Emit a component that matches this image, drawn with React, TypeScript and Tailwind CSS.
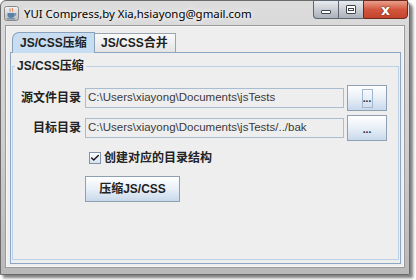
import { Check } from "lucide-react";

function JavaIcon() {
  return (
    <svg width="15" height="15" viewBox="0 0 15 15">
      <defs>
        <linearGradient id="jg" x1="0" y1="0" x2="0" y2="1">
          <stop offset="0" stopColor="#f4f4f4" />
          <stop offset="1" stopColor="#b8b8b8" />
        </linearGradient>
      </defs>
      <rect x="0.5" y="0.5" width="14" height="14" rx="2" fill="url(#jg)" stroke="#8a8a8a" />
      <path d="M6 2.5c-1 1 1 1.5 0 3M8.5 2c-1 1.2 1 1.8 0 3.5" stroke="#e0632a" strokeWidth="1" fill="none" />
      <path d="M3.5 7h7v2.5c0 1.6-1.4 2.5-3.5 2.5S3.5 11.1 3.5 9.5z" fill="#5a7fa8" />
      <path d="M10.5 7.6h1.2v1.6h-1.2" stroke="#5a7fa8" strokeWidth="0.9" fill="none" />
      <rect x="3" y="12.3" width="8" height="1" fill="#5a7fa8" />
    </svg>
  );
}

function CaptionButtons() {
  return (
    <div className="flex self-start -mt-px mr-[1px] h-[19px]">
      <div className="w-[25px] h-full rounded-bl-[4px] border border-[#5e6670] border-r-0 bg-gradient-to-b from-[#e9ecef] via-[#c9ced4] to-[#aab1b9] flex items-center justify-center">
        <div className="w-[10px] h-[4px] mt-[4px] border border-[#3e454c] bg-white rounded-[1px]" />
      </div>
      <div className="w-[25px] h-full border border-[#5e6670] border-r-0 bg-gradient-to-b from-[#e9ecef] via-[#c9ced4] to-[#aab1b9] flex items-center justify-center">
        <div className="w-[10px] h-[9px] border border-[#3e454c] bg-white rounded-[1px] flex items-center justify-center">
          <div className="w-[6px] h-[3px] border border-[#3e454c]" />
        </div>
      </div>
      <div className="w-[45px] h-full rounded-br-[4px] border border-[#6a2a1f] bg-gradient-to-b from-[#e8a08c] via-[#d3563e] to-[#c4432c] flex items-center justify-center text-white font-bold text-[14px] leading-none font-['DejaVu_Sans',sans-serif] [text-shadow:0_0_2px_#5a1a10]">
        x
      </div>
    </div>
  );
}

function OceanButton({ children, className = "" }: { children: React.ReactNode; className?: string }) {
  return (
    <button
      type="button"
      className={`h-[26px] border border-[#8fa0b3] bg-gradient-to-b from-[#ffffff] via-[#e8eff7] to-[#c8d9eb] text-[12px] font-bold text-[#222] flex items-center justify-center ${className}`}
    >
      {children}
    </button>
  );
}

function PathRow({ label, value, focused }: { label: string; value: string; focused?: boolean }) {
  return (
    <div className="flex items-center h-[26px]">
      <div className="w-[68px] text-right text-[12px] font-bold text-[#222]">{label}</div>
      <div className="ml-[4px] w-[259px] h-[20px] border border-[#a8bcd2] bg-[#eeeeee] flex items-center px-[2px] text-[11.5px] text-[#3a3a3a] whitespace-nowrap overflow-hidden">
        {value}
      </div>
      <OceanButton className="ml-[3px] w-[40px]">
        {focused ? (
          <span className="w-[11px] h-[19px] border border-[#a3b8cc] flex items-end justify-center pb-[3px] text-[10px] leading-none">...</span>
        ) : (
          <span className="text-[10px] leading-none pt-[4px]">...</span>
        )}
      </OceanButton>
    </div>
  );
}

export default function App() {
  return (
    <div className="w-[416px] h-[280px] bg-white font-['Liberation_Sans','Noto_Sans_CJK_SC',sans-serif]">
      <div className="w-[410px] h-[275px] rounded-t-[6px] border border-[#6c6c6c] bg-gradient-to-b from-[#dcdcdc] via-[#cfcfcf] to-[#b9b9b9] shadow-[3px_3px_3px_rgba(0,0,0,0.5)] flex flex-col">
        <div className="h-[25px] flex items-center pl-[3px]">
          <JavaIcon />
          <span className="ml-[5px] text-[11.4px] text-black font-['Noto_Sans',sans-serif] [text-shadow:0_0_5px_#fff,0_0_9px_#fff]">
            YUI Compress,by Xia,hsiayong@gmail.com
          </span>
          <div className="ml-auto self-start">
            <CaptionButtons />
          </div>
        </div>
        <div className="mx-[5px] mb-[7px] flex-1 border border-[#f7f7f7] outline outline-1 outline-[#9a9a9a] bg-[#eeeeee] flex flex-col">
          <div className="ml-[3px] mr-[2px] mt-[5px] mb-[2px] flex-1 flex flex-col">
            <div className="flex pl-[2px] h-[20px] items-end">
              <div className="relative z-10 -mb-px h-[21px] w-[83px] rounded-tl-[7px] border border-b-0 border-[#8a9fb8] bg-[#c8ddf2] flex items-center pl-[7px] text-[12px] font-bold text-[#222]">
                JS/CSS压缩
              </div>
              <div className="h-[19px] w-[81px] border border-l-0 border-b-0 border-[#9aa5b0] bg-gradient-to-b from-[#fafafa] to-[#e4e4e4] flex items-center pl-[6px] text-[12px] font-bold text-[#222]">
                JS/CSS合并
              </div>
            </div>
            <div className="flex-1 border border-[#8ca6c4] flex flex-col">
              <div className="ml-[1px] mr-[1px] mt-[13px] mb-[3px] flex-1 border border-[#bcd0e6] flex flex-col">
                <div className="-mt-[8px] ml-[2px] px-[2px] w-fit bg-[#eeeeee] text-[12px] leading-[14px] font-bold text-[#222]">
                  JS/CSS压缩
                </div>
                <div className="mt-[12px] flex flex-col gap-[4px]">
                  <PathRow label="源文件目录" value="C:\Users\xiayong\Documents\jsTests" focused />
                  <PathRow label="目标目录" value="C:\Users\xiayong\Documents\jsTests/../bak" />
                </div>
                <div className="mt-[9px] ml-[76px] h-[16px] flex items-center gap-[3px]">
                  <span className="w-[12px] h-[12px] border border-[#7f93a8] bg-gradient-to-b from-white to-[#d6e2ef] flex items-center justify-center">
                    <Check size={10} strokeWidth={3.5} className="text-[#1a1a1a]" />
                  </span>
                  <span className="text-[12px] font-bold text-[#222]">创建对应的目录结构</span>
                </div>
                <OceanButton className="mt-[10px] ml-[72px] w-[95px]">压缩JS/CSS</OceanButton>
              </div>
            </div>
          </div>
        </div>
      </div>
    </div>
  );
}
